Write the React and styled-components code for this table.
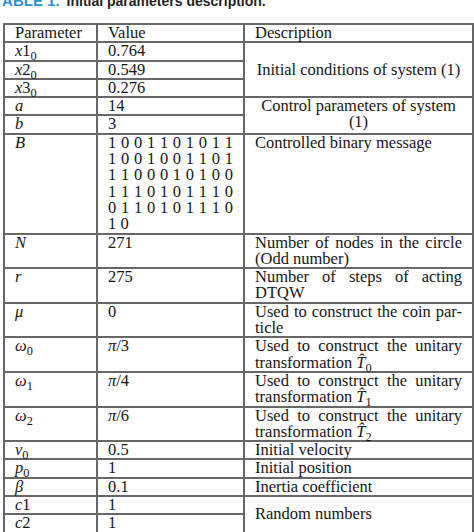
import React from 'react';
import styled, { createGlobalStyle } from 'styled-components';

const GlobalStyle = createGlobalStyle`
  html, body {
    margin: 0;
    padding: 0;
    background: #ffffff;
    overflow: hidden;
  }
`;

const Page = styled.div`
  width: 474px;
  height: 532px;
  overflow: hidden;
  padding-left: 3px;
  box-sizing: border-box;
  color: #161616;
`;

const Caption = styled.div`
  display: flex;
  align-items: baseline;
  gap: 7px;
  margin: -6px 0 15px -9px;
  font-family: "Liberation Sans", Arial, sans-serif;
  font-weight: bold;
  font-size: 14px;
  line-height: 14px;
  white-space: nowrap;
  color: #1f1f1f;
`;

const CaptionLabel = styled.span`
  color: #2a8fd6;
  font-size: 15px;
`;

const Table = styled.table`
  border-collapse: collapse;
  table-layout: fixed;
  width: 469px;
  font-family: "Liberation Serif", "Times New Roman", serif;
  font-size: 16.5px;
  line-height: 16.3px;
`;

const Col = styled.col`
  width: ${(p) => p.$w}px;
`;

const Cell = styled.td`
  border: 2px solid #676767;
  padding: 0 10px;
  vertical-align: ${(p) => (p.$middle ? 'middle' : 'top')};
  text-align: ${(p) => (p.$center ? 'center' : 'left')};
`;

const Line = styled.div`
  text-align: ${(p) => (p.$fill ? 'justify' : 'inherit')};
  text-align-last: ${(p) => (p.$fill ? 'justify' : 'auto')};
`;

const Sym = styled.i`
  font-style: italic;
`;

const Sub = styled.sub`
  font-size: 0.75em;
  line-height: 0;
  vertical-align: -0.3em;
`;

const Lines = ({ items, fillAll }) =>
  items.map((t, i) => (
    <Line key={i} $fill={fillAll || i < items.length - 1}>
      {t}
    </Line>
  ));

const binary = [
  '1 0 0 1 1 0 1 0 1 1',
  '1 0 0 1 0 0 1 1 0 1',
  '1 1 0 0 0 1 0 1 0 0',
  '1 1 1 0 1 0 1 1 1 0',
  '0 1 1 0 1 0 1 1 1 0',
  '1 0',
];

const That = ({ n }) => (
  <>
    <Sym>T̂</Sym>
    <Sub>{n}</Sub>
  </>
);

export default function App() {
  return (
    <Page>
      <GlobalStyle />
      <Caption>
        <CaptionLabel>TABLE 1.</CaptionLabel>
        <span>Initial parameters description.</span>
      </Caption>
      <Table>
        <colgroup>
          <Col $w={93} />
          <Col $w={147} />
          <Col $w={229} />
        </colgroup>
        <tbody>
          <tr>
            <Cell>Parameter</Cell>
            <Cell>Value</Cell>
            <Cell>Description</Cell>
          </tr>
          <tr>
            <Cell><Sym>x</Sym>1<Sub>0</Sub></Cell>
            <Cell>0.764</Cell>
            <Cell rowSpan={3} $middle $center>Initial conditions of system (1)</Cell>
          </tr>
          <tr>
            <Cell><Sym>x</Sym>2<Sub>0</Sub></Cell>
            <Cell>0.549</Cell>
          </tr>
          <tr>
            <Cell><Sym>x</Sym>3<Sub>0</Sub></Cell>
            <Cell>0.276</Cell>
          </tr>
          <tr>
            <Cell><Sym>a</Sym></Cell>
            <Cell>14</Cell>
            <Cell rowSpan={2} $center>
              <Line>Control parameters of system</Line>
              <Line>(1)</Line>
            </Cell>
          </tr>
          <tr>
            <Cell><Sym>b</Sym></Cell>
            <Cell>3</Cell>
          </tr>
          <tr>
            <Cell><Sym>B</Sym></Cell>
            <Cell><Lines items={binary} /></Cell>
            <Cell>Controlled binary message</Cell>
          </tr>
          <tr>
            <Cell><Sym>N</Sym></Cell>
            <Cell>271</Cell>
            <Cell>
              <Lines items={['Number of nodes in the circle', '(Odd number)']} />
            </Cell>
          </tr>
          <tr>
            <Cell><Sym>r</Sym></Cell>
            <Cell>275</Cell>
            <Cell>
              <Lines items={['Number of steps of acting', 'DTQW']} />
            </Cell>
          </tr>
          <tr>
            <Cell><Sym>μ</Sym></Cell>
            <Cell>0</Cell>
            <Cell>
              <Lines items={['Used to construct the coin par-', 'ticle']} />
            </Cell>
          </tr>
          <tr>
            <Cell><Sym>ω</Sym><Sub>0</Sub></Cell>
            <Cell><Sym>π</Sym>/3</Cell>
            <Cell>
              <Lines items={['Used to construct the unitary', <>transformation <That n="0" /></>]} />
            </Cell>
          </tr>
          <tr>
            <Cell><Sym>ω</Sym><Sub>1</Sub></Cell>
            <Cell><Sym>π</Sym>/4</Cell>
            <Cell>
              <Lines items={['Used to construct the unitary', <>transformation <That n="1" /></>]} />
            </Cell>
          </tr>
          <tr>
            <Cell><Sym>ω</Sym><Sub>2</Sub></Cell>
            <Cell><Sym>π</Sym>/6</Cell>
            <Cell>
              <Lines items={['Used to construct the unitary', <>transformation <That n="2" /></>]} />
            </Cell>
          </tr>
          <tr>
            <Cell><Sym>v</Sym><Sub>0</Sub></Cell>
            <Cell>0.5</Cell>
            <Cell>Initial velocity</Cell>
          </tr>
          <tr>
            <Cell><Sym>p</Sym><Sub>0</Sub></Cell>
            <Cell>1</Cell>
            <Cell>Initial position</Cell>
          </tr>
          <tr>
            <Cell><Sym>β</Sym></Cell>
            <Cell>0.1</Cell>
            <Cell>Inertia coefficient</Cell>
          </tr>
          <tr>
            <Cell><Sym>c</Sym>1</Cell>
            <Cell>1</Cell>
            <Cell rowSpan={2} $middle>Random numbers</Cell>
          </tr>
          <tr>
            <Cell><Sym>c</Sym>2</Cell>
            <Cell>1</Cell>
          </tr>
        </tbody>
      </Table>
    </Page>
  );
}
